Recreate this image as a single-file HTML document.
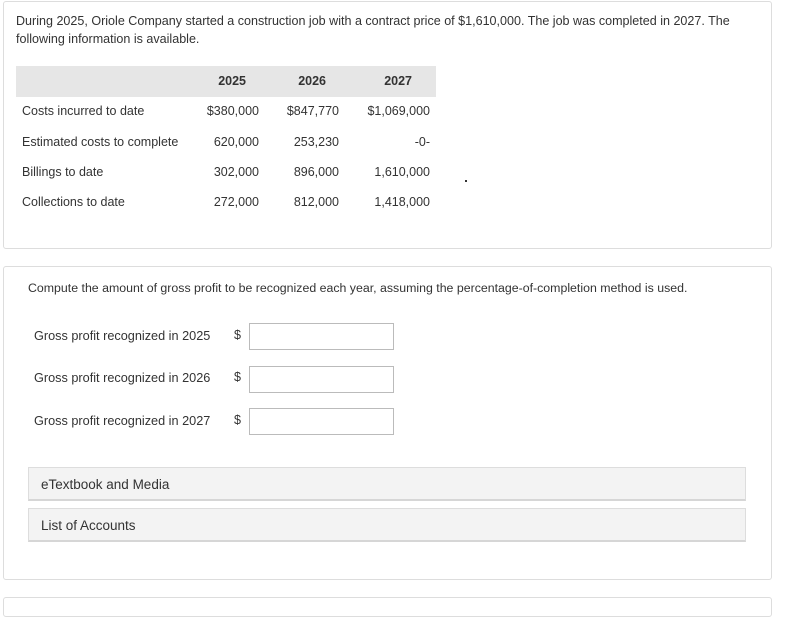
<!DOCTYPE html>
<html><head><meta charset="utf-8"><style>
*{margin:0;padding:0;box-sizing:border-box}
body{width:788px;height:602px;background:#fff;font-family:"Liberation Sans",sans-serif;color:#333;position:relative;overflow:hidden;font-size:12.5px}
.p{position:absolute;border:1px solid #ddd;border-radius:3px;background:#fff}
.a{position:absolute;white-space:nowrap}
.r{text-align:right}
.in{position:absolute;left:249px;width:145px;height:27px;border:1px solid #bbb;background:#fff}
.box{position:absolute;left:28px;width:718px;height:34px;background:#f3f3f3;border:1px solid #ddd;border-bottom:2px solid #d6d6d6;font-size:13.5px;padding:9px 0 0 12px;color:#333}
</style></head><body>
<div class="p" style="left:3px;top:1px;width:769px;height:248px"></div>
<div class="a" style="left:16px;top:14px;font-size:12.55px">During 2025, Oriole Company started a construction job with a contract price of $1,610,000. The job was completed in 2027. The</div>
<div class="a" style="left:16px;top:32px;font-size:12.55px">following information is available.</div>
<div class="a" style="left:16px;top:66px;width:420px;height:31px;background:#e6e6e6"></div>
<div class="a r" style="left:186px;top:74px;width:60px;font-weight:bold">2025</div>
<div class="a r" style="left:266px;top:74px;width:60px;font-weight:bold">2026</div>
<div class="a r" style="left:352px;top:74px;width:60px;font-weight:bold">2027</div>
<div class="a" style="left:22px;top:104px">Costs incurred to date</div>
<div class="a" style="left:22px;top:135px">Estimated costs to complete</div>
<div class="a" style="left:22px;top:165px">Billings to date</div>
<div class="a" style="left:22px;top:195px">Collections to date</div>
<div class="a r" style="left:179px;width:80px;top:104px">$380,000</div>
<div class="a r" style="left:259px;width:80px;top:104px">$847,770</div>
<div class="a r" style="left:340px;width:90px;top:104px">$1,069,000</div>
<div class="a r" style="left:179px;width:80px;top:135px">620,000</div>
<div class="a r" style="left:259px;width:80px;top:135px">253,230</div>
<div class="a r" style="left:340px;width:90px;top:135px">-0-</div>
<div class="a r" style="left:179px;width:80px;top:165px">302,000</div>
<div class="a r" style="left:259px;width:80px;top:165px">896,000</div>
<div class="a r" style="left:340px;width:90px;top:165px">1,610,000</div>
<div class="a r" style="left:179px;width:80px;top:195px">272,000</div>
<div class="a r" style="left:259px;width:80px;top:195px">812,000</div>
<div class="a r" style="left:340px;width:90px;top:195px">1,418,000</div>
<div class="a" style="left:465px;top:180px;width:2px;height:2px;background:#333"></div>

<div class="p" style="left:3px;top:266px;width:769px;height:314px"></div>
<div class="a" style="left:28px;top:281px;font-size:12.35px">Compute the amount of gross profit to be recognized each year, assuming the percentage-of-completion method is used.</div>
<div class="a" style="left:34px;top:329px;font-size:12.7px">Gross profit recognized in 2025</div>
<div class="a" style="left:34px;top:371px;font-size:12.7px">Gross profit recognized in 2026</div>
<div class="a" style="left:34px;top:414px;font-size:12.7px">Gross profit recognized in 2027</div>
<div class="a" style="left:234px;top:328px">$</div>
<div class="a" style="left:234px;top:370px">$</div>
<div class="a" style="left:234px;top:413px">$</div>
<div class="in" style="top:323px"></div>
<div class="in" style="top:366px"></div>
<div class="in" style="top:408px"></div>
<div class="box" style="top:467px">eTextbook and Media</div>
<div class="box" style="top:508px">List of Accounts</div>
<div class="p" style="left:3px;top:597px;width:769px;height:20px"></div>
</body></html>
